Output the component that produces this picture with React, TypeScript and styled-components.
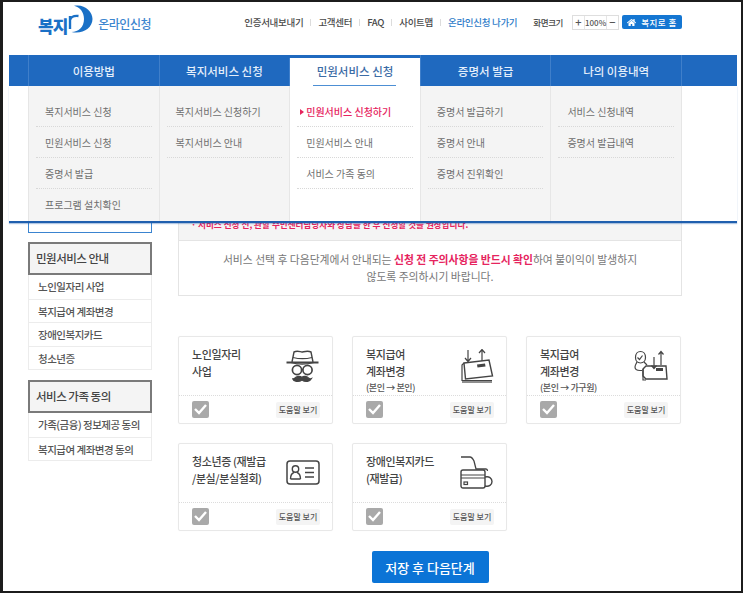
import React from 'react';
import styled, { createGlobalStyle } from 'styled-components';
import { FaHome } from 'react-icons/fa';

const GlobalStyle = createGlobalStyle`
  html, body {
    margin: 0;
    padding: 0;
    background: #fff;
  }
  body {
    font-family: "Noto Sans CJK KR", "Noto Sans", sans-serif;
  }
`;

const Frame = styled.div`
  position: relative;
  box-sizing: border-box;
  width: 743px;
  height: 593px;
  border-style: solid;
  border-color: #1c1c1c;
  border-width: 2px 2px 2px 3px;
  overflow: hidden;
  background: #fff;
`;

const Header = styled.header`
  display: flex;
  align-items: center;
  height: 53px;
  padding: 0 59px 13px 35px;
  box-sizing: border-box;
`;

const Logo = styled.div`
  display: flex;
  align-items: center;
  color: #1a70c6;
`;

const LogoMark = styled.span`
  font-size: 17px;
  font-weight: 900;
  letter-spacing: -1px;
  line-height: 1;
  margin-top: 7px;
`;

const LogoName = styled.span`
  font-size: 12px;
  font-weight: 500;
  letter-spacing: -0.5px;
  margin-left: 5px;
  margin-top: 3px;
  color: #3d86cf;
`;

const Util = styled.nav`
  display: flex;
  align-items: center;
  margin-left: auto;
`;

const UtilLink = styled.a<{ $accent?: boolean }>`
  display: flex;
  align-items: center;
  font-size: 9.5px;
  font-weight: 500;
  letter-spacing: -0.3px;
  color: ${({ $accent }) => ($accent ? '#2f7cc9' : '#4a4a4a')};

  &:not(:first-child)::before {
    content: '';
    width: 1px;
    height: 7px;
    margin: 0 7px;
    background: #dcdcdc;
  }
`;

const ZoomLabel = styled.span`
  font-size: 8.5px;
  font-weight: 500;
  letter-spacing: -0.4px;
  color: #444;
  margin-left: 16px;
`;

const ZoomBox = styled.div`
  display: flex;
  align-items: center;
  height: 13px;
  margin-left: 9px;
  border: 1px solid #dedede;
  font-size: 8px;
  font-weight: 500;
  color: #555;
`;

const ZoomStep = styled.span`
  width: 11px;
  text-align: center;
  font-size: 11px;
  line-height: 13px;
`;

const ZoomValue = styled.span`
  width: 21px;
  text-align: center;
  line-height: 13px;
  border-left: 1px solid #e6e6e6;
  border-right: 1px solid #e6e6e6;
`;

const HomeButton = styled.a`
  display: flex;
  align-items: center;
  justify-content: center;
  gap: 5px;
  width: 60px;
  height: 14px;
  margin-left: 3px;
  border-radius: 2px;
  background: #1476d2;
  color: #fff;
  font-size: 8.5px;
  font-weight: 500;
  letter-spacing: 0.5px;
`;

const Nav = styled.div`
  position: relative;
  z-index: 2;
  margin: 0 4px 0 6px;
`;

const TabBar = styled.div`
  display: flex;
  height: 31px;
  padding: 0 55px 0 19px;
  background: #1f69bf;
`;

const Tab = styled.div<{ $active?: boolean }>`
  position: relative;
  box-sizing: border-box;
  flex: 1 1 0;
  display: flex;
  align-items: center;
  justify-content: center;
  font-size: 11.5px;
  font-weight: 500;
  border-left: 1px solid #3f7fca;
  color: ${({ $active }) => ($active ? '#3c6ca6' : '#e4eefa')};
  background: ${({ $active }) => ($active ? '#fff' : 'transparent')};
  margin-top: ${({ $active }) => ($active ? '3px' : '0')};
  padding-bottom: ${({ $active }) => ($active ? '3px' : '0')};

  &:last-child {
    border-right: 1px solid #3f7fca;
  }

  ${({ $active }) =>
    $active &&
    `&::after {
      content: '';
      position: absolute;
      left: 23px;
      right: 24px;
      bottom: 0;
      height: 1.5px;
      background: #4d8fd4;
    }`}
`;

const Mega = styled.div`
  position: absolute;
  top: 100%;
  left: 0;
  right: 0;
  height: 135px;
  display: flex;
  padding: 0 55px 0 19px;
  background: #fff;
  border-bottom: 2px solid #1f5fae;
  box-shadow: 0 1px 1px rgba(31, 95, 174, 0.35);
`;

const MegaColumn = styled.ul<{ $active?: boolean }>`
  box-sizing: border-box;
  flex: 1 1 0;
  margin: 0;
  padding: 10px 7px 0;
  list-style: none;
  background: ${({ $active }) => ($active ? '#fff' : '#f4f4f4')};
  border-left: 1px solid #e6e6e6;

  &:last-child {
    border-right: 1px solid #e6e6e6;
  }
`;

const MegaItem = styled.li<{ $active?: boolean; $plain?: boolean }>`
  position: relative;
  height: 31px;
  box-sizing: border-box;
  padding-left: 9px;
  font-size: 10px;
  line-height: 32px;
  color: ${({ $active }) => ($active ? '#e6245e' : '#6e6e6e')};
  font-weight: ${({ $active }) => ($active ? 500 : 400)};
  border-bottom: ${({ $plain }) => ($plain ? 'none' : '1px dotted #d8d8d8')};

  ${({ $active }) =>
    $active &&
    `&::before {
      content: '';
      position: absolute;
      left: 3px;
      top: 13px;
      border-left: 4px solid #e6245e;
      border-top: 3px solid transparent;
      border-bottom: 3px solid transparent;
    }`}
`;

const Body = styled.div`
  display: flex;
  gap: 26px;
  padding: 114px 0 0 25px;
`;

const Sidebar = styled.aside`
  display: flex;
  flex-direction: column;
  width: 124px;
  flex: none;
`;

const CurrentBox = styled.div`
  height: 33px;
  box-sizing: border-box;
  border: 1.5px solid #3a84d0;
  margin-bottom: 9px;
`;

const SideTitle = styled.div`
  box-sizing: border-box;
  height: 33px;
  padding-left: 6px;
  border: 2px solid #7a7a7a;
  background: #f4f4f4;
  font-size: 11.5px;
  font-weight: 500;
  letter-spacing: -0.5px;
  line-height: 29px;
  color: #444;
`;

const SideList = styled.ul`
  margin: 0 0 10px;
  padding: 0;
  list-style: none;
  border: 1px solid #ececec;
  border-top: none;
`;

const SideItem = styled.li`
  height: 23.5px;
  box-sizing: border-box;
  padding-left: 9px;
  font-size: 10.5px;
  font-weight: 500;
  letter-spacing: -0.5px;
  line-height: 23px;
  color: #555;

  & + & {
    border-top: 1px solid #ececec;
  }
`;

const Main = styled.main`
  width: 504px;
  flex: none;
`;

const Notice = styled.section`
  border: 1px solid #e4e4e4;
`;

const NoticeHead = styled.div`
  height: 40px;
  box-sizing: border-box;
  padding: 18px 0 0 12px;
  background: #f4f4f4;
  border-bottom: 1px solid #e4e4e4;
  font-size: 8.6px;
  font-weight: 700;
  line-height: 11px;
  color: #e6245e;
`;

const NoticeBody = styled.p`
  margin: 0;
  height: 54px;
  box-sizing: border-box;
  padding-top: 10px;
  text-align: center;
  font-size: 10.8px;
  line-height: 17px;
  color: #777;

  strong {
    color: #e6245e;
    font-weight: 700;
  }
`;

const CardGrid = styled.div`
  display: grid;
  grid-template-columns: repeat(3, 155px);
  gap: 19px;
  margin-top: 40px;
`;

const Card = styled.article`
  box-sizing: border-box;
  height: 88px;
  border: 1px solid #e8e8e8;
  border-radius: 2px;
  box-shadow: 0 0 1px rgba(0, 0, 0, 0.06);
`;

const CardBody = styled.div`
  display: flex;
  align-items: center;
  justify-content: space-between;
  height: 58px;
  padding: 0 12px 0 13px;
  border-bottom: 1px dotted #dcdcdc;
`;

const CardText = styled.div`
  align-self: flex-start;
  padding-top: 9px;
`;

const CardTitle = styled.div`
  font-size: 11px;
  font-weight: 500;
  letter-spacing: -0.4px;
  line-height: 17px;
  color: #444;
  white-space: nowrap;
`;

const CardNote = styled.div`
  font-size: 9px;
  font-weight: 500;
  letter-spacing: -0.4px;
  line-height: 15px;
  color: #555;
`;

const CardFoot = styled.div`
  display: flex;
  align-items: center;
  justify-content: space-between;
  height: 27px;
  padding: 0 12px 0 13px;
`;

const Check = styled.span`
  display: flex;
  align-items: center;
  justify-content: center;
  width: 17px;
  height: 17px;
  border-radius: 2px;
  background: #a9a9a9;
`;

const HelpButton = styled.button`
  height: 16px;
  width: 44px;
  padding: 0;
  border: none;
  border-radius: 2px;
  background: #f4f4f4;
  font-family: inherit;
  font-size: 8px;
  font-weight: 500;
  color: #555;
`;

const Actions = styled.div`
  display: flex;
  justify-content: center;
  margin-top: 20px;
`;

const SaveButton = styled.button`
  width: 117px;
  height: 32px;
  border: none;
  border-radius: 2px;
  background: #0b74d6;
  color: #fff;
  font-family: inherit;
  font-size: 13px;
  font-weight: 500;
`;

const LogoArc = () => (
  <svg width="26" height="30" viewBox="0 0 26 30" style={{ marginTop: -4 }}>
    <path d="M7 .8C17-1.500 25.500 6 25.500 14c0 9-10 15.500-21 13 7 0 12.500-5 12.500-13C17 7 13 2.500 7 .8Z" fill="#1a70c6" />
    <path d="M3 11v13M3 15c1-3 4-4.500 8.500-4" fill="none" stroke="#1a70c6" strokeWidth="2.400" />
  </svg>
);

const iconProps = {
  width: 34,
  height: 34,
  viewBox: '0 0 34 34',
  fill: 'none',
  stroke: '#444',
  strokeWidth: 1.2,
};

const HatIcon = () => (
  <svg {...iconProps}>
    <path d="M6 13 8 3c3-1.500 5-.5 8 0 3-.5 6-1.500 9 0L27 13" strokeWidth="1.400" />
    <path d="M7 8.500c6 1.500 13 1.500 19 0" />
    <path d="M0.500 13.500h32" strokeWidth="1.800" />
    <path d="M5 13.500c7 2 15 2 23 0" />
    <circle cx="11" cy="21" r="4.600" strokeWidth="1.700" />
    <circle cx="21.500" cy="21" r="4.600" strokeWidth="1.700" />
    <path d="M15.600 20.500h1.400" />
    <path d="M16 28.500c-2-2-6-1-7 .5-1 1-2 1-2.500.5 1 3 6 4 9.500 1.500 3.500 2.500 8 1.500 9.500-1.500-1 .5-2 .5-3-.5-1-1.500-5-2.500-6.500-.5Z" fill="#444" />
  </svg>
);

const MailIcon = () => (
  <svg {...iconProps}>
    <path d="M8 1v11M5 9l3 3.500L11 9M22 12V1M19 4l3-3.500L25 4" />
    <path d="M4 14 29 11l3.500 16-27 3Z" strokeWidth="1.400" />
    <path d="M4 14 2 16v15.500h30" />
    <path d="M2 33h30" />
    <path d="M17 15.500l8-1 .5 3-8 1Z" fill="#444" stroke="none" />
  </svg>
);

const PersonMailIcon = () => (
  <svg {...iconProps}>
    <path d="M6.500 2.500c3 0 5 2.500 5 6 0 3-2 5.500-5 5.500s-5-2.500-5-5.500c0-3.500 2-6 5-6Z" />
    <path d="M3.500 8.500l2 2 3-4" />
    <path d="M3 13c-1 2-2 3-2 5s2 3.500 5 3.500h2M10 13l3 3" />
    <path d="M20 8v11M17.500 16.500 20 19.500l2.500-3M27 16V3M24.500 5.500 27 2.500l2.500 3" />
    <path d="M9 20 12 17h20l1 13H12l-3-3Z" strokeWidth="1.400" />
    <path d="M9 20v11h3" />
    <path d="M22 19h7v3h-7Z" fill="#444" stroke="none" />
  </svg>
);

const IdIcon = () => (
  <svg {...iconProps}>
    <rect x="1" y="5" width="32" height="23" rx="3" strokeWidth="1.500" />
    <circle cx="9.500" cy="13" r="3.200" strokeWidth="1.400" />
    <path d="M4.500 23c0-4 2-6 3.500-6.500M14.500 23c0-4-2-6-3.500-6.500M4.500 23h10" strokeWidth="1.400" />
    <path d="M19 12h9M19 16.500h9M19 21h9" strokeWidth="1.400" />
  </svg>
);

const WheelCardIcon = () => (
  <svg {...iconProps}>
    <path d="M1 1h9c2 0 3 2 4 4l2 8h10c1 0 1.500 1 1.500 2" strokeWidth="1.300" />
    <rect x="1" y="14" width="24" height="18" rx="2" strokeWidth="1.400" />
    <path d="M1 19h24M1 22h24" />
    <rect x="4" y="26" width="3.500" height="2.500" />
    <path d="M25 21c4-1 7 1 7 4.500S29 31 25 30" strokeWidth="1.400" />
  </svg>
);

const CheckMark = () => (
  <svg width="13" height="11" viewBox="0 0 13 11" fill="none" stroke="#fff" strokeWidth="2.400">
    <path d="M1 5l4 4 7-8" />
  </svg>
);

const tabs = ['이용방법', '복지서비스 신청', '민원서비스 신청', '증명서 발급', '나의 이용내역'];

const megaColumns = [
  ['복지서비스 신청', '민원서비스 신청', '증명서 발급', '프로그램 설치확인'],
  ['복지서비스 신청하기', '복지서비스 안내'],
  ['민원서비스 신청하기', '민원서비스 안내', '서비스 가족 동의'],
  ['증명서 발급하기', '증명서 안내', '증명서 진위확인'],
  ['서비스 신청내역', '증명서 발급내역'],
];

const sideGroups = [
  { title: '민원서비스 안내', items: ['노인일자리 사업', '복지급여 계좌변경', '장애인복지카드', '청소년증'] },
  { title: '서비스 가족 동의', items: ['가족(금융) 정보제공 동의', '복지급여 계좌변경 동의'] },
];

const cards = [
  { title: ['노인일자리', '사업'], icon: <HatIcon /> },
  { title: ['복지급여', '계좌변경'], note: '(본인 → 본인)', icon: <MailIcon /> },
  { title: ['복지급여', '계좌변경'], note: '(본인 → 가구원)', icon: <PersonMailIcon /> },
  { title: ['청소년증 (재발급', '/분실/분실철회)'], icon: <IdIcon /> },
  { title: ['장애인복지카드', '(재발급)'], icon: <WheelCardIcon /> },
];

export default function App() {
  return (
    <Frame>
      <GlobalStyle />
      <Header>
        <Logo>
          <LogoMark>복지</LogoMark>
          <LogoArc />
          <LogoName>온라인신청</LogoName>
        </Logo>
        <Util>
          <UtilLink>인증서내보내기</UtilLink>
          <UtilLink>고객센터</UtilLink>
          <UtilLink>FAQ</UtilLink>
          <UtilLink>사이트맵</UtilLink>
          <UtilLink $accent>온라인신청 나가기</UtilLink>
          <ZoomLabel>화면크기</ZoomLabel>
          <ZoomBox>
            <ZoomStep>+</ZoomStep>
            <ZoomValue>100%</ZoomValue>
            <ZoomStep>−</ZoomStep>
          </ZoomBox>
          <HomeButton>
            <FaHome size={9} />
            복지로 홈
          </HomeButton>
        </Util>
      </Header>

      <Nav>
        <TabBar>
          {tabs.map((tab, i) => (
            <Tab key={tab} $active={i === 2}>
              {tab}
            </Tab>
          ))}
        </TabBar>
        <Mega>
          {megaColumns.map((items, c) => (
            <MegaColumn key={c} $active={c === 2}>
              {items.map((item, i) => (
                <MegaItem key={item} $active={c === 2 && i === 0} $plain={item === '프로그램 설치확인'}>
                  {item}
                </MegaItem>
              ))}
            </MegaColumn>
          ))}
        </Mega>
      </Nav>

      <Body>
        <Sidebar>
          <CurrentBox />
          {sideGroups.map((group) => (
            <div key={group.title}>
              <SideTitle>{group.title}</SideTitle>
              <SideList>
                {group.items.map((item) => (
                  <SideItem key={item}>{item}</SideItem>
                ))}
              </SideList>
            </div>
          ))}
        </Sidebar>

        <Main>
          <Notice>
            <NoticeHead>· 서비스 신청 전, 관할 주민센터담당자와 상담을 한 후 신청할 것을 권장합니다.</NoticeHead>
            <NoticeBody>
              서비스 선택 후 다음단계에서 안내되는 <strong>신청 전 주의사항을 반드시 확인</strong>하여 불이익이 발생하지
              <br />
              않도록 주의하시기 바랍니다.
            </NoticeBody>
          </Notice>

          <CardGrid>
            {cards.map((card, i) => (
              <Card key={i}>
                <CardBody>
                  <CardText>
                    {card.title.map((line) => (
                      <CardTitle key={line}>{line}</CardTitle>
                    ))}
                    {card.note && <CardNote>{card.note}</CardNote>}
                  </CardText>
                  {card.icon}
                </CardBody>
                <CardFoot>
                  <Check>
                    <CheckMark />
                  </Check>
                  <HelpButton>도움말 보기</HelpButton>
                </CardFoot>
              </Card>
            ))}
          </CardGrid>

          <Actions>
            <SaveButton>저장 후 다음단계</SaveButton>
          </Actions>
        </Main>
      </Body>
    </Frame>
  );
}
